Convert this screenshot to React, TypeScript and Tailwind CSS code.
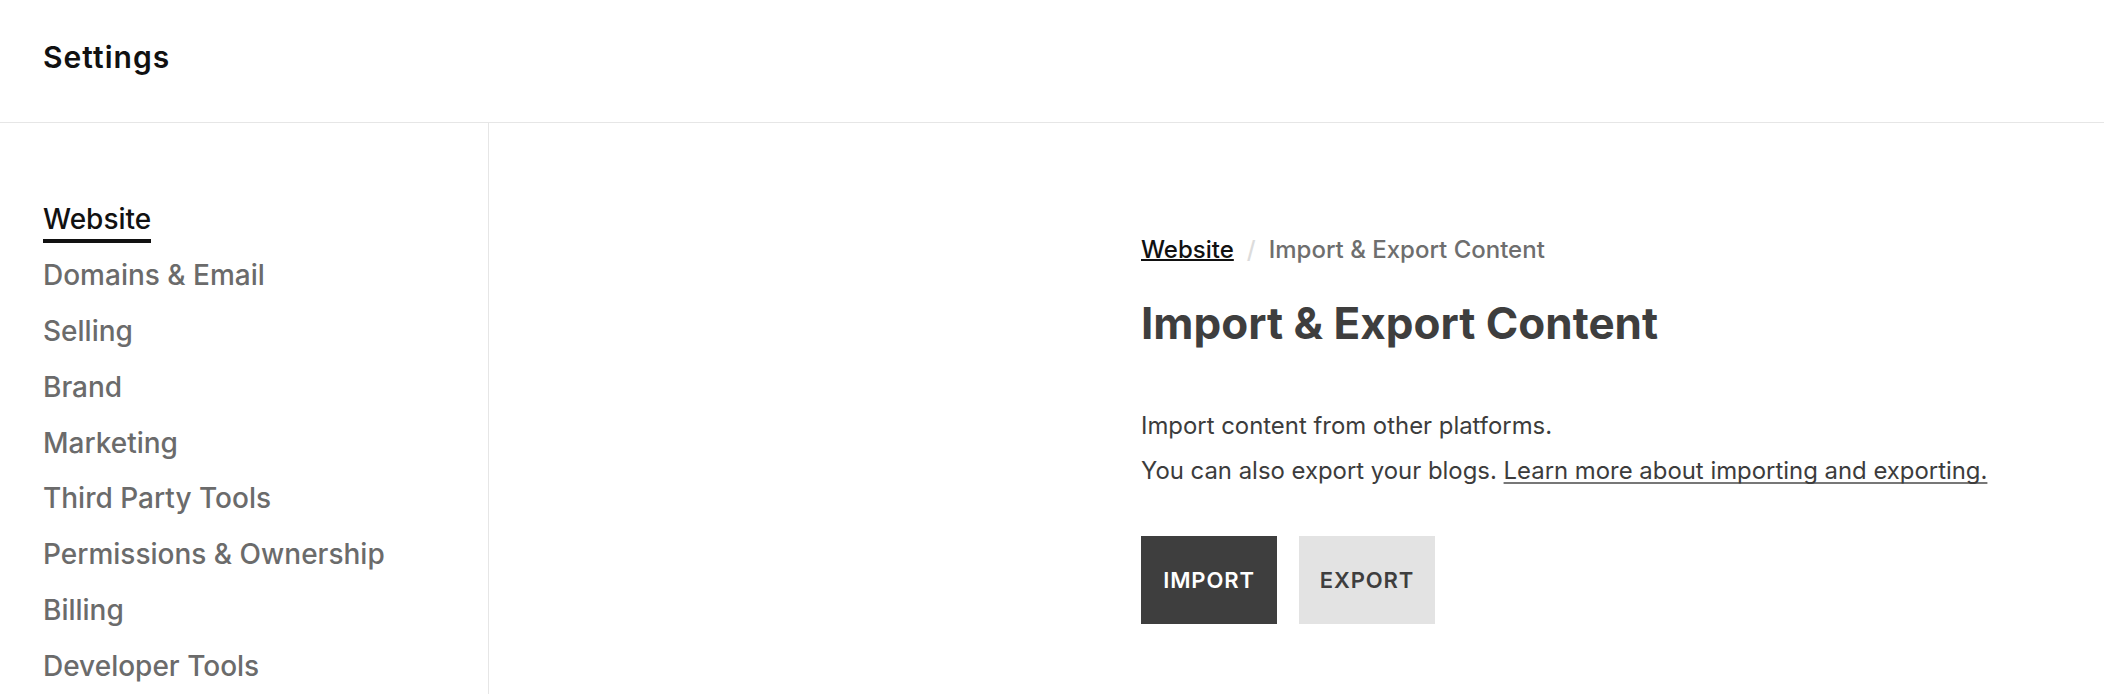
import React from "react";

const navItems = [
  "Website",
  "Domains & Email",
  "Selling",
  "Brand",
  "Marketing",
  "Third Party Tools",
  "Permissions & Ownership",
  "Billing",
  "Developer Tools",
];

export default function App() {
  return (
    <div
      className="h-screen overflow-hidden bg-white flex flex-col"
      style={{ fontFamily: "Inter, 'Liberation Sans', sans-serif" }}
    >
      <header className="h-[123px] shrink-0 border-b border-[#e6e6e6] pl-[43px] pt-[42px]">
        <h1 className="text-[30px] leading-none font-semibold text-[#111] tracking-[0.035em]">
          Settings
        </h1>
      </header>
      <div className="flex flex-1 min-h-0">
        <aside className="w-[489px] shrink-0 border-r border-[#e6e6e6] pl-[43px] pt-[68.5px]">
          <nav className="flex flex-col">
            {navItems.map((item, i) => (
              <div key={item} className="h-[55.8px] flex items-center">
                {i === 0 ? (
                  <span className="relative text-[28px] leading-none font-medium text-[#111]">
                    {item}
                    <span className="absolute left-0 right-0 top-[34px] h-[4px] bg-[#111]" />
                  </span>
                ) : (
                  <span className="text-[28px] leading-none font-medium text-[#6b6b6b]">
                    {item}
                  </span>
                )}
              </div>
            ))}
          </nav>
        </aside>
        <main className="flex-1 pl-[652px] pt-[115px]">
          <div className="flex items-center text-[24px] leading-none font-medium">
            <span className="text-[#111] underline decoration-2 underline-offset-[1px] [text-decoration-skip-ink:none]">
              Website
            </span>
            <span className="mx-[13px] text-[#dcdcdc]">/</span>
            <span className="text-[#6e6e6e]">Import &amp; Export Content</span>
          </div>
          <h2 className="mt-[39px] text-[44px] leading-none font-bold text-[#3e3e3e]">
            Import &amp; Export Content
          </h2>
          <div className="mt-[58px] text-[23.9px] leading-[45px] text-[#3c3c3c]">
            <p>Import content from other platforms.</p>
            <p>
              You can also export your blogs.{" "}
              <a className="underline decoration-2 decoration-[#777] underline-offset-[3px] [text-decoration-skip-ink:none]">
                Learn more about importing and exporting.
              </a>
            </p>
          </div>
          <div className="mt-[43px] flex gap-[22px]">
            <button className="w-[136px] h-[88px] bg-[#3e3e3e] text-white text-[22px] font-semibold tracking-[0.04em]">
              IMPORT
            </button>
            <button className="w-[136px] h-[88px] bg-[#e3e3e3] text-[#3e3e3e] text-[22px] font-semibold tracking-[0.04em]">
              EXPORT
            </button>
          </div>
        </main>
      </div>
    </div>
  );
}
